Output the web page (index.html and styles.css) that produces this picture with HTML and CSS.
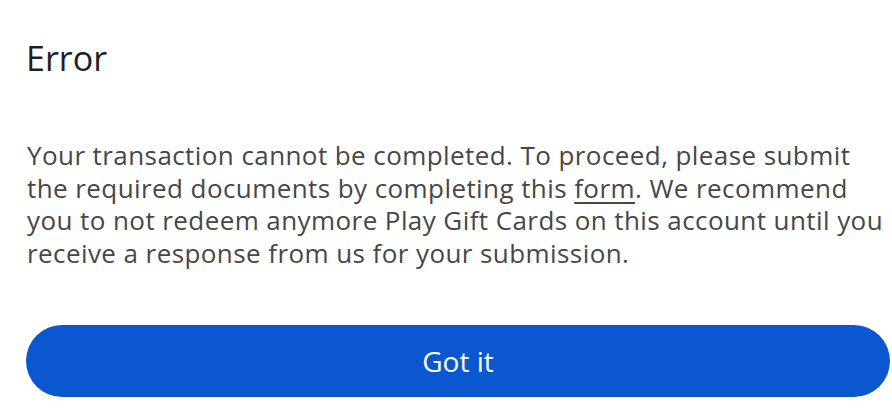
FILE: index.html
```html
<!DOCTYPE html>
<html lang="en">
<head>
<meta charset="utf-8">
<link rel="stylesheet" href="styles.css">
</head>
<body>
<div class="dialog">
  <h1 class="title">Error</h1>
  <p class="message">Your transaction cannot be completed. To proceed, please submit<br>the required documents by completing this <a class="link" href="#">form</a>. We recommend<br>you to not redeem anymore Play Gift Cards on this account until you<br>receive a response from us for your submission.</p>
  <button class="btn" type="button">Got it</button>
</div>
</body>
</html>
```
FILE: styles.css
```css
html, body {
  margin: 0;
  padding: 0;
  background: #ffffff;
}
.dialog {
  width: 892px;
  height: 416px;
  box-sizing: border-box;
  padding: 36px 2px 0 26px;
  display: flex;
  flex-direction: column;
  font-family: "Open Sans", Roboto, sans-serif;
}
.title {
  margin: 0;
  font-weight: 400;
  font-size: 34px;
  line-height: 44px;
  color: #1f1f1f;
}
.message {
  margin: 59px 0 0 1px;
  font-size: 26px;
  letter-spacing: 0.42px;
  line-height: 32.7px;
  color: #474747;
  white-space: nowrap;
}
.link {
  color: #474747;
  text-decoration: underline;
  text-underline-offset: 4px;
}
.btn {
  margin-top: 55px;
  width: 864px;
  height: 72px;
  border: none;
  border-radius: 36px;
  background: #0b57d0;
  color: #ffffff;
  font-family: "Open Sans", Roboto, sans-serif;
  font-size: 28px;
  font-weight: 500;
  padding: 0;
}
```
